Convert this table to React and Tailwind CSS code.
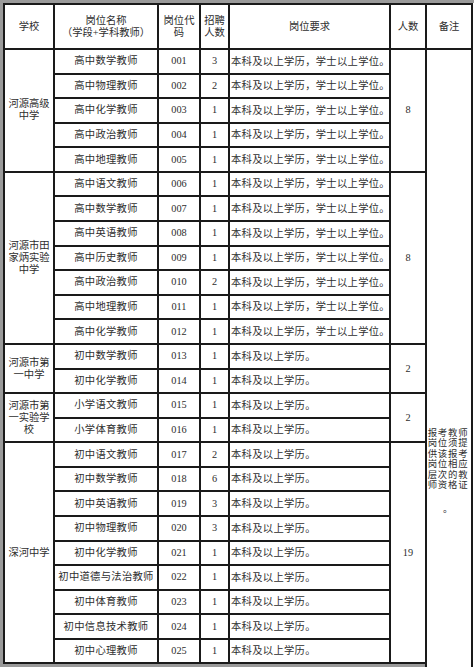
import React from "react";

const A = "本科及以上学历，学士以上学位。";
const B = "本科及以上学历。";

const rows = [
  ["高中数学教师", "001", "3", A],
  ["高中物理教师", "002", "2", A],
  ["高中化学教师", "003", "1", A],
  ["高中政治教师", "004", "1", A],
  ["高中地理教师", "005", "1", A],
  ["高中语文教师", "006", "1", A],
  ["高中数学教师", "007", "1", A],
  ["高中英语教师", "008", "1", A],
  ["高中历史教师", "009", "1", A],
  ["高中政治教师", "010", "2", A],
  ["高中地理教师", "011", "1", A],
  ["高中化学教师", "012", "1", A],
  ["初中数学教师", "013", "1", B],
  ["初中化学教师", "014", "1", B],
  ["小学语文教师", "015", "1", B],
  ["小学体育教师", "016", "1", B],
  ["初中语文教师", "017", "2", B],
  ["初中数学教师", "018", "6", B],
  ["初中英语教师", "019", "3", B],
  ["初中物理教师", "020", "3", B],
  ["初中化学教师", "021", "1", B],
  ["初中道德与法治教师", "022", "1", B],
  ["初中体育教师", "023", "1", B],
  ["初中信息技术教师", "024", "1", B],
  ["初中心理教师", "025", "1", B],
];

const schools = {
  0: { lines: ["河源高级", "中学"], span: "row-span-5" },
  5: { lines: ["河源市田", "家炳实验", "中学"], span: "row-span-7" },
  12: { lines: ["河源市第", "一中学"], span: "row-span-2" },
  14: { lines: ["河源市第", "一实验学", "校"], span: "row-span-2" },
  16: { lines: ["深河中学"], span: "row-span-9" },
};

const counts = {
  0: { n: "8", span: "row-span-5" },
  5: { n: "8", span: "row-span-7" },
  12: { n: "2", span: "row-span-2" },
  14: { n: "2", span: "row-span-2" },
  16: { n: "19", span: "row-span-9" },
};

const cell =
  "border-r-2 border-b-2 border-[#1a1a1a] flex flex-col items-center justify-center text-center leading-[12px] whitespace-nowrap";

export default function App() {
  const items = [];
  rows.forEach((r, i) => {
    if (schools[i]) {
      items.push(
        <div key={`s${i}`} className={`${cell} ${schools[i].span}`}>
          {schools[i].lines.map((l, k) => (
            <div key={k}>{l}</div>
          ))}
        </div>
      );
    }
    items.push(
      <div key={`p${i}`} className={`${cell} tracking-[0.3px]`}>
        {r[0]}
      </div>
    );
    items.push(
      <div key={`c${i}`} className={cell}>
        {r[1]}
      </div>
    );
    items.push(
      <div key={`n${i}`} className={cell}>
        {r[2]}
      </div>
    );
    items.push(
      <div
        key={`q${i}`}
        className="border-r-2 border-b-2 border-[#1a1a1a] flex items-center justify-start pl-[1px] tracking-[0.3px] whitespace-nowrap"
      >
        {r[3]}
      </div>
    );
    if (counts[i]) {
      items.push(
        <div key={`t${i}`} className={`${cell} ${counts[i].span}`}>
          {counts[i].n}
        </div>
      );
    }
    if (i === 0) {
      items.push(
        <div
          key="remark"
          className="row-span-25 border-r-2 border-[#1a1a1a] flex flex-col items-center pt-[378px] pr-[2px] text-[9.4px] tracking-[0.8px] leading-[10.4px] whitespace-nowrap"
        >
          <div>报考教师</div>
          <div>岗位须提</div>
          <div>供该报考</div>
          <div>岗位相应</div>
          <div>层次的教</div>
          <div>师资格证</div>
          <div className="mt-[14px]">。</div>
        </div>
      );
    }
  });

  return (
    <div className="w-[474px] h-[667px] overflow-hidden bg-white flex flex-col text-[10.3px] text-[#2e2e2e] font-['Liberation_Serif','Noto_Sans_CJK_SC',serif]">
      <div className="h-[3px] shrink-0 bg-[#9a9a9a]" />
      <div className="flex shrink-0">
        <div className="w-[3px] shrink-0 bg-[#9a9a9a]" />
        <div className="grid grid-cols-[50px_104px_42px_29px_161px_36px_46px] grid-rows-[45px_repeat(25,24.58px)] border-l-2 border-t-2 border-[#1a1a1a]">
          <div className={cell}>学校</div>
          <div className={cell}>
            <div>岗位名称</div>
            <div>（学段+学科教师）</div>
          </div>
          <div className={cell}>
            <div>岗位代</div>
            <div>码</div>
          </div>
          <div className={cell}>
            <div>招聘</div>
            <div>人数</div>
          </div>
          <div className={cell}>岗位要求</div>
          <div className={cell}>人数</div>
          <div className={cell}>备注</div>
          {items}
        </div>
      </div>
      <div className="flex flex-1">
        <div className="w-[425px] shrink-0 bg-[#9a9a9a]" />
        <div className="w-[48px] shrink-0 border-x-2 border-[#1a1a1a] bg-white" />
      </div>
    </div>
  );
}
